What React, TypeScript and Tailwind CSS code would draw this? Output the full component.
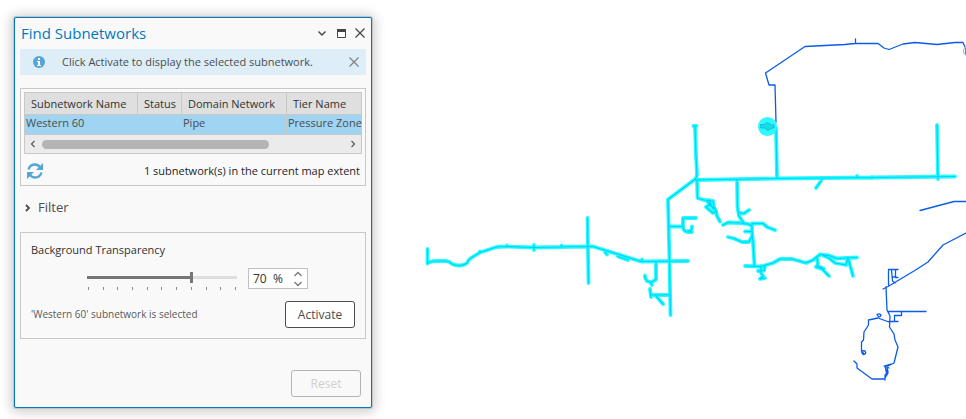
import { useState } from "react";
import type { CSSProperties } from "react";

const rows = [
  { name: "Western 60", status: "", domain: "Pipe", tier: "Pressure Zone" },
];

const ticks = Array.from({ length: 11 }, (_, i) => i);

const selectedPipes = [
  "M427.5 249V263.5Q430 261 436 261H446Q449 261 452 264Q455 265.5 460 265.5Q465 265 467 263Q468 260 471 258L480 252.5L495 247.5Q499 246.5 507 246.5L534 247.5L560 247L588 246.5H593L641 261.5L688 261",
  "M480 251.5L481 252M507 245.500V246M534 245V250M561.5 245.500V246.5",
  "M587.5 218L588.5 283",
  "M605 252L607 254.5M618 256.5L628 260M642 259.5V261",
  "M695 126L696 155L697 174Q696.500 179 694 180L668 199.500L669.500 262L670.500 315",
  "M693.500 126H696.500M694 180L777 178.500L872 177.500L955 176.500",
  "M656 262V279.500L651 282.500L647 281L645 277.500V275.500M650 282L652 285",
  "M650 289L651 297M651 295H669M656 296L663 304",
  "M669 226.500H683V218H696M683 226Q683 231 687 232H692M692 226.500Q692 232 688 231",
  "M697 180L697.500 198L704 200L713 201L714 207L716 211L717 216L720 221.500M709 200L711 204L706 207L713 213L716 211M707 201L714 209",
  "M737 180L737.500 207L739 216L744 223.500M740 213L744 213.500L749 210",
  "M723 225L728 222.500L740 223L748 224L752 226V223.500H763L767 227L775 230",
  "M752 224V232L753 242L754.500 266M745 231.500H751M728 237L734 238.500L742 242H749L752 236",
  "M745 266L761 266.500L773 263L780 259H792L806 263L813 260L820 254.500L829 255.500L837 258.500L857 257.500",
  "M822 255L829 258L835 263L846 265L848 258L853 276M817 258L818 264L816 267L822 269L829 276M818 266L824 269",
  "M758 271L764 270.500L765 266M761 266V273L763 276L760 279L765 278",
  "M776 128L777 178",
  "M937 125L938 179",
  "M822 179.500L816 188",
  "M857 176V177M872 177V178",
].join("");

const otherPipes = [
  "M776 122L775 85H769L765.500 73L805 46.500L845 44.500L855 43.500H878L884 48L889 49.500L903 44L915 42.500L937 44.500L955 42.500H963L965 47M855.500 39V43",
  "M920 210.500L954 201.500H966",
  "M966 233L943 245L928 262L914 271L888 286.500L883 289",
  "M886 287L887 310L890 316L889.500 327L894 334L895 340L898 347L894 363L888 366",
  "M888 311.500H926M901.500 312V315.500H894.500V321M889 321.500H898",
  "M888.500 285V269.500H898M891.500 270L892.500 281L895 283M895.500 270V277.500H898M892 277H896",
  "M889 322L878 318L868.500 320V325L864 332L863.500 340L861.500 342V351L864 354M877 314.500Q879 313 881 315Q880 318 878 316ZM862 353Q861 350 865 351Q867 354 863 354.500Z",
  "M854 361L857 364V368L872 379H885L885 375L888 372L887 367L884 366L891 364M885 380V378L888 373M887 370V375L885 366L889 368",
].join("");

function Chevron({ d, className }: { d: string; className: string }) {
  return (
    <svg viewBox="0 0 8 8" className={className} fill="none" stroke="currentColor" aria-hidden="true">
      <path d={d} />
    </svg>
  );
}

function Cross({ className }: { className: string }) {
  return (
    <svg viewBox="0 0 10 10" className={className} fill="none" stroke="currentColor" strokeWidth="1.2" aria-hidden="true">
      <path d="M.5.5l9 9M9.500.5l-9 9" />
    </svg>
  );
}

function TitleBar() {
  return (
    <header className="flex h-[31px] items-center justify-between pl-px pb-px text-[#444]">
      <h1 className="text-[15px] text-[#0079c1]">Find Subnetworks</h1>
      <div className="flex items-center gap-[7px]">
        <button aria-label="Window options" className="flex size-3 items-center justify-center">
          <Chevron d="M.5 2.500L4 6l3.500-3.500" className="size-2 stroke-[1.4]" />
        </button>
        <button aria-label="Maximize" className="flex size-3 items-center justify-center">
          <svg viewBox="0 0 9 9" className="size-[9px]" aria-hidden="true">
            <path d="M.5.5h8v8h-8z" fill="#fff" stroke="currentColor" />
            <path d="M0 0h9v3H0z" fill="currentColor" />
          </svg>
        </button>
        <button aria-label="Close" className="flex size-3 items-center justify-center">
          <Cross className="size-[10px]" />
        </button>
      </div>
    </header>
  );
}

function Message() {
  return (
    <div role="status" className="flex h-[26px] items-center bg-[#deeef9] pl-[13px] pr-[7px] text-[#4c4c4c]">
      <svg viewBox="0 0 12 12" className="size-3" aria-hidden="true">
        <circle cx="6" cy="6" r="6" fill="#56a5d8" />
        <path d="M5 2h2v2H5zM4 5h3v4h1v1H4V9h1V6H4z" fill="#fff" />
      </svg>
      <p className="flex-1 pl-[17px] leading-4">Click Activate to display the selected subnetwork.</p>
      <button aria-label="Dismiss message" className="text-[#808080]">
        <Cross className="size-[10px]" />
      </button>
    </div>
  );
}

function Subnetworks() {
  const head = "border-r border-b border-[#c8c8c8] bg-[#dfdfdf] pl-[6px] text-left font-normal last:border-r-0";
  const cell = "border-r border-b border-[#c8c8c8] pl-px pb-[3px] last:border-r-0";
  return (
    <section className="mt-[13px] border border-[#c8c8c8] p-[3px] pb-[6px]">
      <div className="border border-[#c8c8c8]">
        <table className="w-full table-fixed border-separate border-spacing-0 whitespace-nowrap leading-4 text-[#323232]">
          <thead>
            <tr className="h-[22px]">
              <th className={`${head} w-[113px]`}>Subnetwork Name</th>
              <th className={`${head} w-[44px]`}>Status</th>
              <th className={`${head} w-[105px]`}>Domain Network</th>
              <th className={head}>Tier Name</th>
            </tr>
          </thead>
          <tbody>
            {rows.map((r) => (
              <tr key={r.name} className="h-5 bg-[#9fd4f3] text-[#4c4c4c]">
                <td className={cell}>{r.name}</td>
                <td className={cell}>{r.status}</td>
                <td className={cell}>{r.domain}</td>
                <td className={cell}>{r.tier}</td>
              </tr>
            ))}
          </tbody>
        </table>
        <div className="flex h-[18px] items-center bg-[#ebebeb] px-1 text-[#5a5a5a]">
          <button aria-label="Scroll left">
            <Chevron d="M5.500 1L2.500 4l3 3" className="size-2 stroke-[1.2]" />
          </button>
          <div className="mx-[5px] flex-1">
            <div className="h-[9px] w-3/4 rounded-full bg-[#b4b4b4]" />
          </div>
          <button aria-label="Scroll right">
            <Chevron d="M2.500 1l3 3-3 3" className="size-2 stroke-[1.2]" />
          </button>
        </div>
      </div>
      <div className="flex h-[25px] items-end justify-between pl-[3px] pr-[2px]">
        <button aria-label="Refresh">
          <svg viewBox="0 0 16 16" className="size-4" fill="none" stroke="#56a5d8" strokeWidth="2.400" aria-hidden="true">
            <path d="M1.500 6.500Q3 1.500 8 1.500Q11 1.500 13.500 4.500M14.500 9.500Q13 14.500 8 14.500Q5 14.500 2.500 11.500" />
            <path d="M16 0v7H9zM0 16V9h7z" fill="#56a5d8" stroke="none" />
          </svg>
        </button>
        <p className="leading-4 text-[#1e1e1e]">1 subnetwork(s) in the current map extent</p>
      </div>
    </section>
  );
}

function Transparency() {
  const [value, setValue] = useState(70);
  const clamp = (n: number) => Math.max(0, Math.min(100, n));
  return (
    <section className="border border-[#c8c8c8] px-[10px] pt-[9px] pb-[10px]">
      <label htmlFor="transparency" className="block leading-4 text-[#323232]">
        Background Transparency
      </label>
      <div className="mt-[10px] flex items-start pl-14">
        <div className="w-[150px] pt-1">
          <input
            id="transparency"
            type="range"
            min={0}
            max={100}
            value={value}
            onChange={(e) => setValue(Number(e.target.value))}
            style={{ "--fill": `${value}%` } as CSSProperties}
            className="block h-[11px] w-full appearance-none bg-transparent [&::-webkit-slider-runnable-track]:h-[3px] [&::-webkit-slider-runnable-track]:bg-[linear-gradient(to_right,#767676_var(--fill),#dedede_var(--fill))] [&::-webkit-slider-thumb]:-mt-1 [&::-webkit-slider-thumb]:h-[11px] [&::-webkit-slider-thumb]:w-[3px] [&::-webkit-slider-thumb]:appearance-none [&::-webkit-slider-thumb]:bg-[#767676]"
          />
          <div className="mt-1 flex justify-between px-px">
            {ticks.map((t) => (
              <span key={t} className="h-[3px] w-px bg-[#8c8c8c]" />
            ))}
          </div>
        </div>
        <div className="ml-[11px] flex h-[21px] w-[60px] items-center border border-[#c0c0c0] bg-white pl-1 pr-[5px]">
          <input
            aria-label="Transparency percent"
            value={`${value}  %`}
            onChange={(e) => setValue(clamp(parseInt(e.target.value) || 0))}
            className="w-full min-w-0 flex-1 whitespace-pre bg-transparent text-xs text-[#323232] outline-none"
          />
          <div className="flex flex-col gap-[2px] text-[#767676]">
            <button aria-label="Increase" onClick={() => setValue(clamp(value + 1))}>
              <Chevron d="M.5 6L4 2.500L7.500 6" className="size-2 stroke-[1.3]" />
            </button>
            <button aria-label="Decrease" onClick={() => setValue(clamp(value - 1))}>
              <Chevron d="M.5 2L4 5.500L7.500 2" className="size-2 stroke-[1.3]" />
            </button>
          </div>
        </div>
      </div>
      <div className="mt-[11px] flex items-center justify-between">
        <p className="text-[10px] text-[#5a5a5a]">'Western 60' subnetwork is selected</p>
        <button className="h-[27px] w-[70px] rounded-[3px] border border-[#4c4c4c] bg-white text-xs text-[#4c4c4c]">
          Activate
        </button>
      </div>
    </section>
  );
}

function NetworkMap() {
  return (
    <svg
      viewBox="386 0 580 419"
      role="img"
      aria-label="Water network map"
      className="min-w-0 flex-1"
      fill="none"
      strokeLinecap="round"
      strokeLinejoin="round"
    >
      <path d={otherPipes} stroke="#0a5be8" strokeWidth="1.300" />
      <path d={selectedPipes} stroke="#28fbff" strokeWidth="3.800" />
      <path d={selectedPipes} stroke="#00d4fa" strokeWidth="1.200" />
      <circle cx="767.500" cy="126.500" r="9.500" fill="#30f8ff" />
      <path d="M761 124.500h3l3.500-2 4 2.500h2.500v3h-2l-4 2.500-3.500-2.500H761z" fill="#18dcec" stroke="#08b8d0" strokeWidth=".8" />
      <circle cx="969" cy="51" r="5.500" fill="#fff" stroke="#a8b0b4" />
      <path d="M965.500 48v6" stroke="#3f98b8" />
    </svg>
  );
}

export default function App() {
  return (
    <main className="flex items-start overflow-hidden bg-white font-['Open_Sans','Noto_Sans',sans-serif] text-[11px]">
      <div className="shrink-0 px-[14px] pt-[17px] pb-[11px]">
        <div className="w-[358px] rounded-[2px] border border-[#0079c1] bg-[#f9f9f9] px-[5px] pb-[10px] shadow-[0_0_0_1px_#c4c4c4,0_1px_12px_3px_rgba(0,0,0,0.2)]">
          <TitleBar />
          <Message />
          <Subnetworks />
          <button aria-expanded="false" className="flex h-[46px] items-center gap-[6px] pl-1 pb-[2px] text-[13px] text-[#4c4c4c]">
            <Chevron d="M2 1l3 3-3 3" className="size-2 stroke-[1.8]" />
            Filter
          </button>
          <Transparency />
          <div className="mt-[31px] flex justify-end pr-[5px]">
            <button disabled className="h-[27px] w-[70px] rounded-[3px] border border-[#b4b4b4] text-xs text-[#cfcfcf]">
              Reset
            </button>
          </div>
        </div>
      </div>
      <NetworkMap />
    </main>
  );
}
